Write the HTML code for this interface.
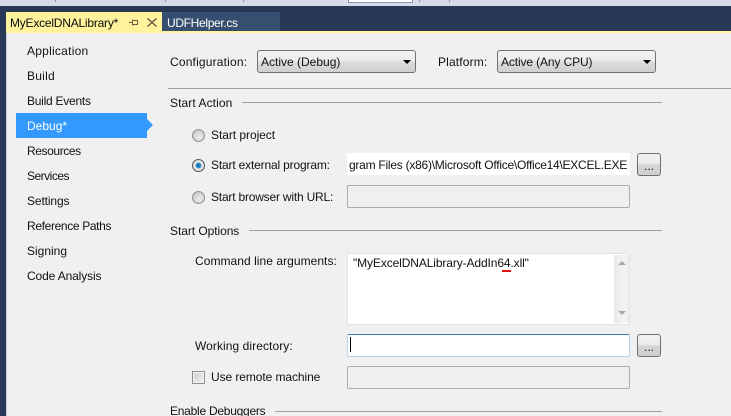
<!DOCTYPE html>
<html><head><meta charset="utf-8">
<style>
html,body{margin:0;padding:0;width:731px;height:416px;overflow:hidden;background:#f0f0f0}
body{position:relative;font-family:"Liberation Sans",sans-serif;font-size:12px;color:#111}
.a{position:absolute}
.t{position:absolute;white-space:nowrap;line-height:16px;height:16px}
.l{position:absolute;height:1px;background:#a0a0a0}
.box{position:absolute;box-sizing:border-box;background:#efefef;border:1px solid #adadad;border-radius:2px}
.white{background:#fff;border:1px solid #e2e3ea;overflow:hidden}
.combo{position:absolute;box-sizing:border-box;height:23px;border:1px solid #707070;border-radius:3px;background:linear-gradient(#f2f2f2 0,#ebebeb 48%,#dddddd 50%,#cfcfcf 100%)}
.arr{position:absolute;width:0;height:0;border-left:4px solid transparent;border-right:4px solid transparent;border-top:4px solid #000}
.btn{position:absolute;box-sizing:border-box;width:24px;height:23px;border:1px solid #707070;border-radius:3px;background:linear-gradient(#f2f2f2 0,#ebebeb 48%,#d6d6d6 50%,#cfcfcf 100%);text-align:center;line-height:24px;font-size:12px}
.radio{position:absolute;width:11px;height:11px;border-radius:50%;border:1px solid #8e8f8f;background:radial-gradient(circle at 60% 65%,#ececec 0,#d6d6d6 50%,#bcbcbc 100%)}
</style></head><body>
<div class="a" style="left:0;top:0;width:731px;height:6px;background:#d6dbe9"></div>
<div class="a" style="left:55px;top:0;width:1px;height:2px;background:#8a93a8"></div>
<div class="a" style="left:165px;top:0;width:1px;height:2px;background:#8a93a8"></div>
<div class="a" style="left:243px;top:0;width:1px;height:2px;background:#8a93a8"></div>
<div class="a" style="left:348px;top:0;box-sizing:border-box;width:65px;height:3px;background:#fff;border:1px solid #8a93a8;border-top:0"></div>
<div class="a" style="left:419px;top:0;width:1px;height:2px;background:#8a93a8"></div>
<div class="a" style="left:449px;top:0;width:1px;height:2px;background:#8a93a8"></div>
<div class="a" style="left:0;top:6px;width:731px;height:25px;background:#293955"></div>
<div class="a" style="left:0;top:6px;width:6px;height:410px;background:#293955"></div>
<div class="a" style="left:6px;top:31px;width:725px;height:2px;background:#fff29d"></div>
<div class="a" style="left:6px;top:33px;width:1px;height:383px;background:#c5cbdb"></div>

<div class="a" style="left:6px;top:12px;width:156px;height:20px;background:#fff29d"></div>
<div class="a" style="left:162px;top:12px;width:118px;height:19px;background:#364e6f"></div>
<div class="t" style="left:10px;top:15px;color:#0c0c0c;letter-spacing:-.22px">MyExcelDNALibrary*</div>
<svg class="a" style="left:129px;top:19px" width="10" height="8" viewBox="0 0 10 8"><path d="M0 3.5H3.5M3.5 0.5V6.5M3.5 1.5H8.5V5.5H3.5" fill="none" stroke="#6b6346" stroke-width="1"/></svg>
<svg class="a" style="left:147px;top:18px" width="10" height="9" viewBox="0 0 10 9"><path d="M.5 .5L9.5 8.5M9.5 .5L.5 8.5" fill="none" stroke="#6b6346" stroke-width="1.5"/></svg>
<div class="t" style="left:167px;top:15px;color:#fff;letter-spacing:-.33px">UDFHelper.cs</div>

<div class="t" style="left:27px;top:43px;letter-spacing:.25px">Application</div>
<div class="t" style="left:27px;top:68px;letter-spacing:.25px">Build</div>
<div class="t" style="left:27px;top:93px;letter-spacing:-.25px">Build Events</div>
<div class="a" style="left:16px;top:113px;width:131px;height:25px;background:#3399ff"></div>
<div class="a" style="left:147px;top:119px;width:0;height:0;border-top:6px solid transparent;border-bottom:6px solid transparent;border-left:6px solid #3399ff"></div>
<div class="t" style="left:27px;top:118px;color:#fff">Debug*</div>
<div class="t" style="left:27px;top:143px;letter-spacing:-.4px">Resources</div>
<div class="t" style="left:27px;top:168px;letter-spacing:-.5px">Services</div>
<div class="t" style="left:27px;top:193px;letter-spacing:-.12px">Settings</div>
<div class="t" style="left:27px;top:218px;letter-spacing:-.35px">Reference Paths</div>
<div class="t" style="left:27px;top:243px">Signing</div>
<div class="t" style="left:27px;top:268px;letter-spacing:-.13px">Code Analysis</div>

<div class="t" style="left:170px;top:54px;letter-spacing:.18px">Configuration:</div>
<div class="combo" style="left:257px;top:50px;width:159px"></div>
<div class="t" style="left:261px;top:54px">Active (Debug)</div>
<div class="arr" style="left:403px;top:60px"></div>
<div class="t" style="left:438px;top:54px;letter-spacing:.15px">Platform:</div>
<div class="combo" style="left:497px;top:50px;width:159px"></div>
<div class="t" style="left:501px;top:54px;letter-spacing:-.12px">Active (Any CPU)</div>
<div class="arr" style="left:643px;top:60px"></div>

<div class="l" style="left:168px;top:88px;width:563px"></div>
<div class="t" style="left:170px;top:95px;letter-spacing:.08px">Start Action</div>
<div class="l" style="left:242px;top:102px;width:420px"></div>

<div class="radio" style="left:192px;top:129px"></div>
<div class="t" style="left:211px;top:127px;letter-spacing:-.05px">Start project</div>
<div class="radio" style="left:192px;top:159px;background:radial-gradient(circle,#0f5f9e 0,#2f8fd0 30%,#e8e8e8 45%,#d0d0d0 100%);border-color:#555"></div>
<div class="t" style="left:211px;top:157px;letter-spacing:-.17px">Start external program:</div>
<div class="a" style="left:347px;top:153px;width:283px;height:22px;background:#fff"></div>
<div class="a" style="left:349px;top:153px;width:281px;height:22px;overflow:hidden">
  <div class="t" style="right:3px;top:4px;letter-spacing:-.25px">C:\Program Files (x86)\Microsoft Office\Office14\EXCEL.EXE</div>
</div>
<div class="btn" style="left:637px;top:153px">...</div>
<div class="radio" style="left:192px;top:191px"></div>
<div class="t" style="left:211px;top:189px;letter-spacing:-.2px">Start browser with URL:</div>
<div class="box" style="left:347px;top:185px;width:283px;height:23px"></div>

<div class="t" style="left:170px;top:223px;letter-spacing:-.06px">Start Options</div>
<div class="l" style="left:249px;top:230px;width:413px"></div>

<div class="t" style="left:195px;top:253px;letter-spacing:.05px">Command line arguments:</div>
<div class="box white" style="left:347px;top:253px;width:283px;height:72px">
  <div class="t" style="left:5px;top:1px;letter-spacing:-.11px">"MyExcelDNALibrary-AddIn64.xll"</div>
  <div class="a" style="left:154px;top:16px;width:9px;height:2px;background:#e01010"></div>
  <div class="a" style="left:266px;top:1px;width:15px;height:68px;background:linear-gradient(90deg,#e9e9e9,#f3f3f3 60%,#eeeeee)"></div>
  <div class="a" style="left:270px;top:7px;width:0;height:0;border-left:4px solid transparent;border-right:4px solid transparent;border-bottom:4px solid #a8a8a8"></div>
  <div class="a" style="left:270px;top:57px;width:0;height:0;border-left:4px solid transparent;border-right:4px solid transparent;border-top:4px solid #a8a8a8"></div>
</div>

<div class="t" style="left:195px;top:338px;letter-spacing:.07px">Working directory:</div>
<div class="a" style="left:347px;top:334px;box-sizing:border-box;width:283px;height:23px;background:#fff;border:1px solid #b5d5ea;border-top-color:#3d7bad;border-radius:2px"></div>
<div class="a" style="left:350px;top:337px;width:1px;height:15px;background:#000"></div>
<div class="btn" style="left:637px;top:334px">...</div>

<div class="a" style="left:192px;top:371px;box-sizing:border-box;width:13px;height:13px;border:1px solid #8e8f8f;background:linear-gradient(135deg,#cfcfcf,#f2f2f2);box-shadow:inset 0 0 0 1px #f4f4f4"></div>
<div class="t" style="left:211px;top:369px;letter-spacing:-.08px">Use remote machine</div>
<div class="box" style="left:347px;top:366px;width:283px;height:23px"></div>

<div class="t" style="left:170px;top:403px;letter-spacing:-.25px">Enable Debuggers</div>
<div class="l" style="left:275px;top:411px;width:387px"></div>
</body></html>
